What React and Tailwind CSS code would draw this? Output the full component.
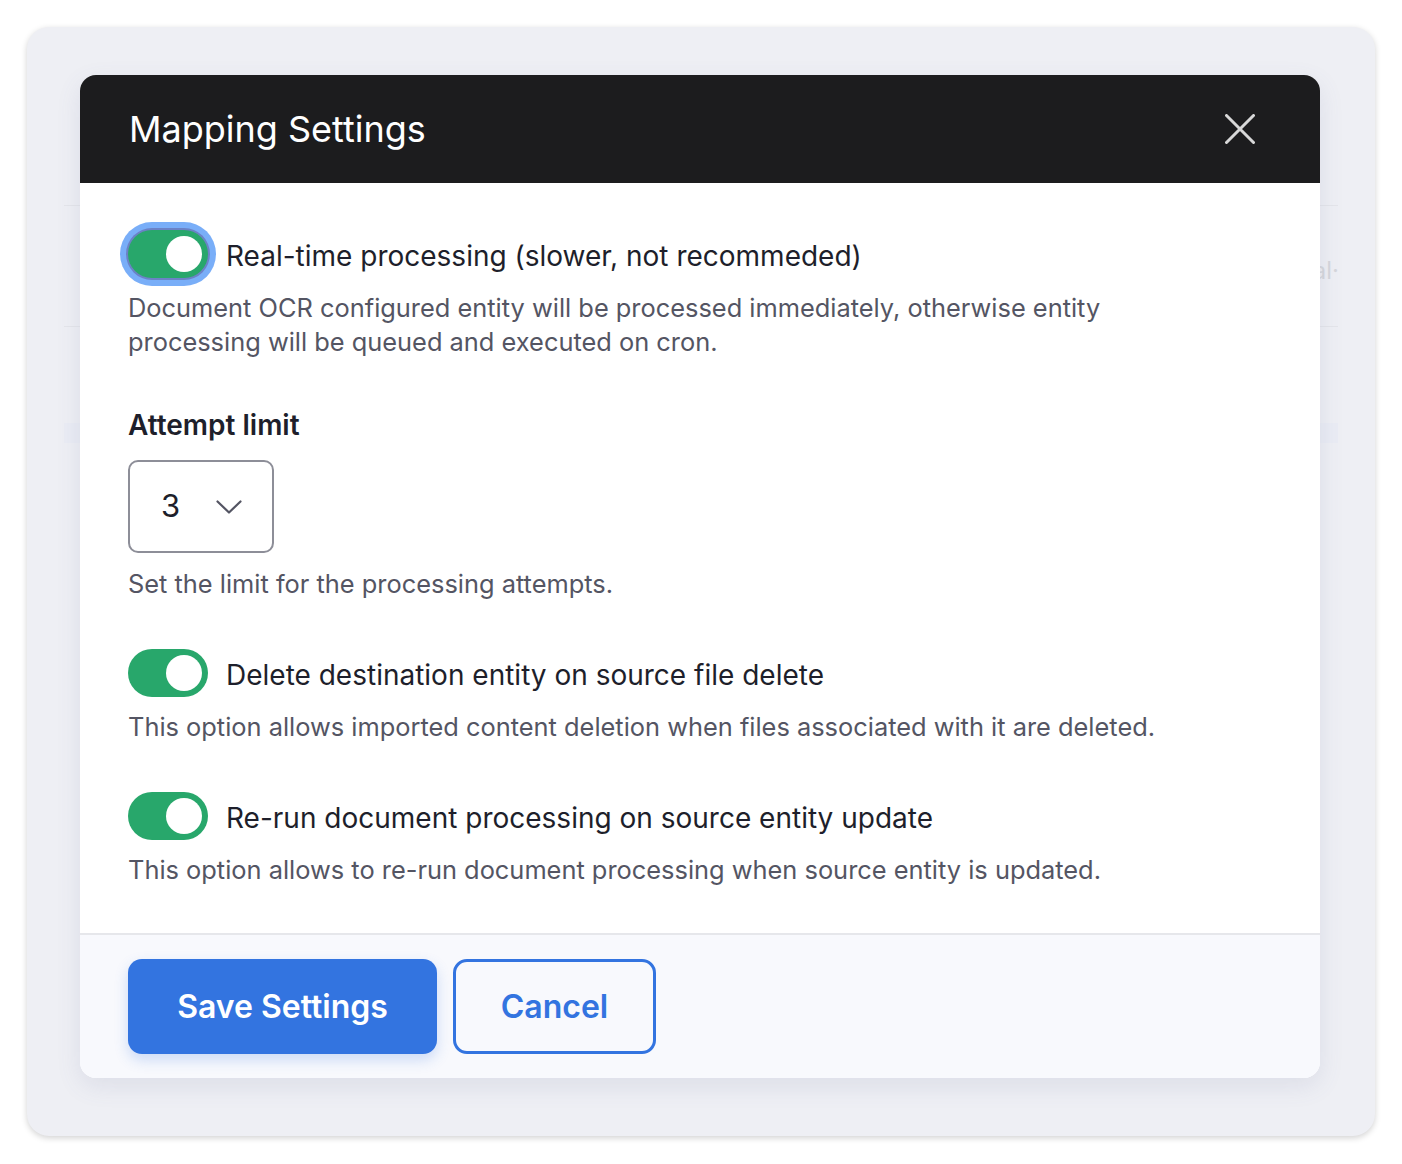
function Toggle({ focused }) {
  return (
    <button
      type="button"
      className={
        "relative flex h-[48px] w-[80px] shrink-0 items-center justify-end rounded-full bg-[#28a76b] pr-[6px] " +
        (focused ? "shadow-[0_0_0_2px_#6b82c6,0_0_0_8px_#79aef8]" : "")
      }
    >
      <span className="h-[36px] w-[36px] rounded-full bg-white" />
    </button>
  );
}

function Option({ label, help, focused }) {
  return (
    <div>
      <div className="flex items-center gap-[18px]">
        <Toggle focused={focused} />
        <span className="mt-[3px] text-[28px] leading-[34px] text-[#1e1f2b]">{label}</span>
      </div>
      <p className="mt-[13px] text-[25.4px] leading-[34px] text-[#545563]">{help}</p>
    </div>
  );
}

export default function App() {
  return (
    <div className="min-h-screen bg-white pt-[27px] pl-[27px]" style={{ fontFamily: "Inter, 'Noto Sans', sans-serif" }}>
      <div className="relative w-[1348px] h-[1109px] rounded-[22px] bg-[#eeeff4] shadow-[0_2px_6px_rgba(0,0,0,0.18)] pt-[48px] pl-[53px]">
        {/* faded page behind the modal */}
        <div className="absolute inset-0 pointer-events-none">
          <div className="absolute left-[37px] right-[37px] top-[178px] h-px bg-[#e4e5ea]" />
          <div className="absolute left-[37px] right-[37px] top-[299px] h-px bg-[#e4e5ea]" />
          <div className="absolute right-[36px] top-[226px] text-[24px] text-[#d6d7dc]">al·</div>
          <div className="absolute left-[37px] right-[37px] top-[396px] h-[20px] bg-[#eaecf4]" />
        </div>

        <div className="relative w-[1240px] rounded-[16px] bg-white shadow-[0_8px_24px_rgba(90,100,150,0.12)]">
          <div className="flex h-[108px] items-center justify-between rounded-t-[16px] bg-[#1c1c1e] pl-[49px] pr-[65px]">
            <h2 className="text-[36px] font-normal text-white">Mapping Settings</h2>
            <svg width="30" height="30" viewBox="0 0 30 30" className="text-[#d8d8d8]">
              <path d="M1.5 1.5 L28.5 28.5 M28.5 1.5 L1.5 28.5" stroke="currentColor" strokeWidth="3" strokeLinecap="round" />
            </svg>
          </div>

          <div className="px-[48px] pt-[47px] pb-[46px]">
            <Option
              focused
              label="Real-time processing (slower, not recommeded)"
              help={
                <>
                  Document OCR configured entity will be processed immediately, otherwise entity
                  <br />
                  processing will be queued and executed on cron.
                </>
              }
            />

            <div className="mt-[49px]">
              <h3 className="text-[28px] leading-[34px] font-semibold text-[#1e1f2b]">Attempt limit</h3>
              <div className="mt-[18px] flex h-[93px] w-[146px] items-center gap-[36px] rounded-[10px] border-2 border-[#8d8e98] pl-[31px]">
                <span className="text-[31px] text-[#1e1f2b]">3</span>
                <svg width="26" height="14" viewBox="0 0 26 14" className="text-[#545563]">
                  <path d="M1.5 1.5 L13 12.5 L24.5 1.5" fill="none" stroke="currentColor" strokeWidth="2.2" strokeLinecap="round" strokeLinejoin="round" />
                </svg>
              </div>
              <p className="mt-[14px] text-[25.4px] leading-[34px] text-[#545563]">
                Set the limit for the processing attempts.
              </p>
            </div>

            <div className="mt-[48px]">
              <Option
                label="Delete destination entity on source file delete"
                help="This option allows imported content deletion when files associated with it are deleted."
              />
            </div>

            <div className="mt-[48px]">
              <Option
                label="Re-run document processing on source entity update"
                help="This option allows to re-run document processing when source entity is updated."
              />
            </div>
          </div>

          <div className="flex gap-[16px] rounded-b-[16px] border-t-2 border-[#e6e7eb] bg-[#f8f9fd] px-[48px] py-[24px]">
            <button className="h-[95px] w-[309px] rounded-[14px] bg-[#3374e0] text-[32px] font-semibold text-white shadow-[0_6px_14px_rgba(51,116,224,0.22)]">
              Save Settings
            </button>
            <button className="h-[95px] w-[203px] rounded-[14px] border-[3px] border-[#3374e0] text-[32px] font-semibold text-[#3374e0]">
              Cancel
            </button>
          </div>
        </div>
      </div>
    </div>
  );
}
